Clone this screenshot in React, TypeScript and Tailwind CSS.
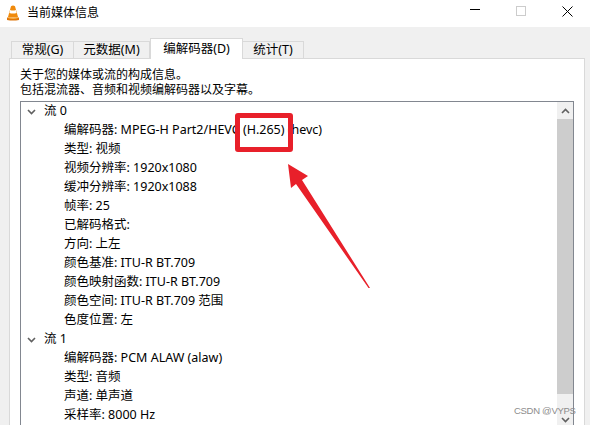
import React from "react";

const rows: Array<{ text: string; level: 0 | 1 }> = [
  { text: "流 0", level: 0 },
  { text: "编解码器: MPEG-H Part2/HEVC (H.265) (hevc)", level: 1 },
  { text: "类型: 视频", level: 1 },
  { text: "视频分辨率: 1920x1080", level: 1 },
  { text: "缓冲分辨率: 1920x1088", level: 1 },
  { text: "帧率: 25", level: 1 },
  { text: "已解码格式:", level: 1 },
  { text: "方向: 上左", level: 1 },
  { text: "颜色基准: ITU-R BT.709", level: 1 },
  { text: "颜色映射函数: ITU-R BT.709", level: 1 },
  { text: "颜色空间: ITU-R BT.709 范围", level: 1 },
  { text: "色度位置: 左", level: 1 },
  { text: "流 1", level: 0 },
  { text: "编解码器: PCM ALAW (alaw)", level: 1 },
  { text: "类型: 音频", level: 1 },
  { text: "声道: 单声道", level: 1 },
  { text: "采样率: 8000 Hz", level: 1 },
];

const tabs = [
  { label: "常规(G)", w: "w-[63px]" },
  { label: "元数据(M)", w: "w-[77px]" },
  { label: "编解码器(D)", w: "w-[93px]", active: true },
  { label: "统计(T)", w: "w-[62px]" },
];

function VlcIcon() {
  return (
    <svg width="14" height="16" viewBox="0 0 14 16">
      <path d="M5 1.2 Q7 0 9 1.2 L12 12 H2 Z" fill="#f08a0c" />
      <path d="M4.2 5 Q7 6 9.8 5 L10.6 8 Q7 9.2 3.4 8 Z" fill="#fff" />
      <path d="M1 12.5 H13 V15 Q7 16.2 1 15 Z" fill="#e0760a" />
      <path d="M2.6 12 Q7 13.6 11.4 12 L11.6 13.2 Q7 14.6 2.4 13.2 Z" fill="#fbb040" />
    </svg>
  );
}

function Chevron({ up }: { up?: boolean }) {
  return (
    <svg width="9" height="6" viewBox="0 0 9 6">
      <path d={up ? "M1 5 L4.5 1.5 L8 5" : "M1 1 L4.5 4.5 L8 1"} fill="none" stroke="#606060" strokeWidth="1.6" />
    </svg>
  );
}

export default function App() {
  return (
    <div className="relative w-[590px] h-[425px] overflow-hidden bg-[#f0f0f0] text-black font-['Noto_Sans','Noto_Sans_CJK_SC',sans-serif]">
      {/* title bar */}
      <div className="h-[27px] bg-white flex items-center">
        <div className="ml-[6px] mt-[-2px]">
          <VlcIcon />
        </div>
        <div className="ml-[7px] text-[12px] leading-none mt-[-2px]">当前媒体信息</div>
        <div className="ml-auto flex items-center h-full">
          <div className="w-[46px] flex justify-center">
            <div className="w-[10px] h-px bg-black mt-[-5px]" />
          </div>
          <div className="w-[46px] flex justify-center">
            <div className="w-[10px] h-[10px] border border-[#cccccc] mt-[-5px]" />
          </div>
          <div className="w-[46px] flex justify-center mt-[-5px]">
            <svg width="11" height="11" viewBox="0 0 11 11">
              <path d="M0.5 0.5 L10.5 10.5 M10.5 0.5 L0.5 10.5" stroke="#000" strokeWidth="1" />
            </svg>
          </div>
        </div>
      </div>

      {/* tabs */}
      <div className="flex items-end pl-[11px] pt-[10px] h-[31px]">
        {tabs.map((t) =>
          t.active ? (
            <div
              key={t.label}
              className={`${t.w} h-[21px] -mb-px relative z-10 bg-white border border-b-0 border-[#d9d9d9] flex items-center justify-center text-[12.5px] leading-none`}
            >
              {t.label}
            </div>
          ) : (
            <div
              key={t.label}
              className={`${t.w} h-[17px] border border-b-0 border-[#d9d9d9] -ml-px first:ml-0 flex items-center justify-center text-[12.5px] leading-none`}
            >
              {t.label}
            </div>
          )
        )}
      </div>

      {/* panel */}
      <div className="ml-[9px] mr-[5px] h-[400px] border border-[#d9d9d9] bg-white">
        <div className="pl-[10px] pt-[8px] text-[12px] leading-[15px]">
          <p className="h-[15px]">关于您的媒体或流的构成信息。</p>
          <p className="h-[15px]">包括混流器、音频和视频编解码器以及字幕。</p>
        </div>
        <div className="mt-[4px] ml-[10px] mr-[10px] h-[340px] border border-[#828790] flex">
          <div className="flex-1">
            {rows.map((r, i) =>
              r.level === 0 ? (
                <div key={i} className="h-[19px] flex items-center text-[12.5px]">
                  <div className="w-[23px] pl-[6px] flex items-center">
                    <Chevron />
                  </div>
                  <span>{r.text}</span>
                </div>
              ) : (
                <div key={i} className="h-[19px] flex items-center pl-[43px] text-[12.5px] whitespace-nowrap">
                  {r.text}
                </div>
              )
            )}
          </div>
          <div className="w-[16px] flex flex-col">
            <div className="h-[17px] bg-[#f0f0f0] flex items-center justify-center">
              <Chevron up />
            </div>
            <div className="h-[275px] bg-[#cdcdcd]" />
            <div className="h-[17px] bg-[#f0f0f0]" />
            <div className="h-[17px] bg-[#f0f0f0] flex items-center justify-center">
              <Chevron />
            </div>
          </div>
        </div>
      </div>

      {/* annotation */}
      <div className="absolute left-[235px] top-[113px] w-[58px] h-[39px] border-[5px] border-[#e8202a] rounded-[3px]" />
      <svg className="absolute left-0 top-0 pointer-events-none" width="590" height="425" viewBox="0 0 590 425">
        <polygon points="288,164 308,176 302,180 370,288 368.5,288 296,184 291,188" fill="#e8202a" />
      </svg>
      <div className="absolute left-[514px] top-[406px] text-[9.5px] tracking-[-0.3px] leading-none text-[#8c8c8c] font-['Liberation_Sans',sans-serif]">
        CSDN @VYPS
      </div>
    </div>
  );
}
